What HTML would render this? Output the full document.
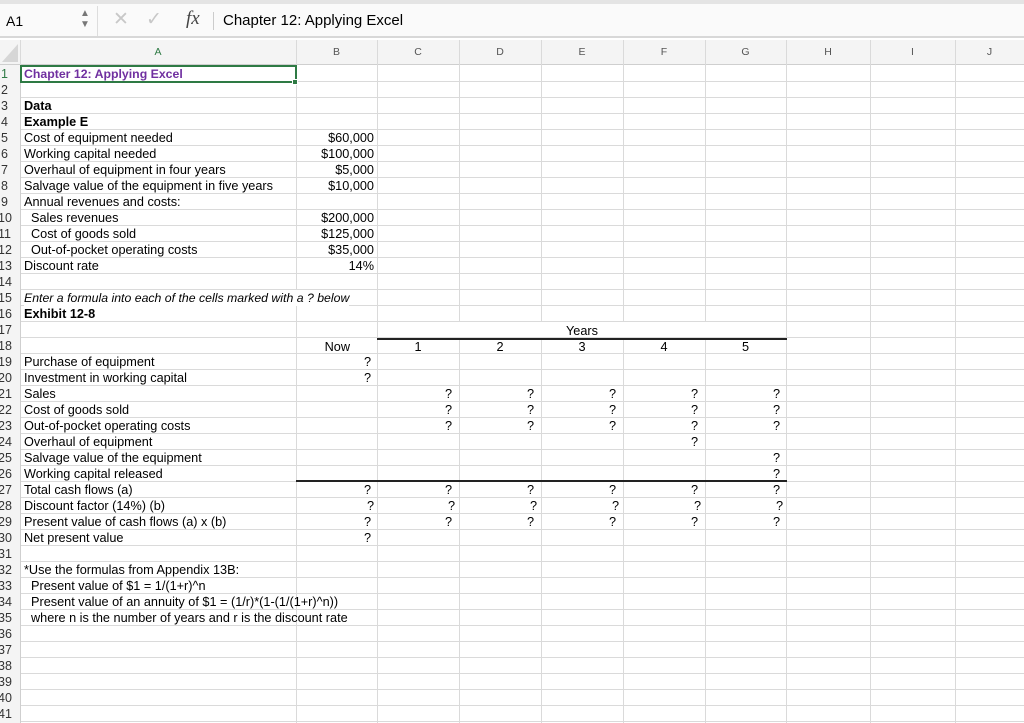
<!DOCTYPE html>
<html><head><meta charset="utf-8">
<style>
*{margin:0;padding:0;box-sizing:border-box}
body{width:1024px;height:723px;overflow:hidden;background:#fff;font-family:"Liberation Sans",Arial,sans-serif;position:relative;color:#000}
.fb{position:absolute;left:0;top:0;width:1024px;height:38px;background:#fafafa;border-top:4px solid #e4e4e4;border-bottom:2px solid #d8d8d8}
.grid{position:absolute;left:0;top:65px;width:1024px;height:658px;
background:repeating-linear-gradient(to bottom,transparent 0,transparent 15px,#dadada 15px,#dadada 16px);background-position:0 1px}
.v{position:absolute;top:40px;width:1px;height:683px;background:#dadada}
.hdr{position:absolute;left:0;top:40px;width:1024px;height:25px;background:#f4f4f4;border-bottom:1px solid #cfcfcf}
.hl{position:absolute;top:46px;font-size:10.5px;color:#555;text-align:center}
.rn{position:absolute;left:0;top:65px;width:21px;height:658px;background:#f4f4f4;border-right:1px solid #cfcfcf}
.r{position:absolute;left:-2px;font-size:12.5px;color:#333;width:22px;height:16px;line-height:16px}
.t{position:absolute;font-size:12.7px;line-height:16px;height:16px;white-space:nowrap}
.rb{position:absolute;font-size:12.7px;line-height:16px;height:16px;text-align:right;white-space:nowrap}
.c{position:absolute;font-size:12.7px;line-height:16px;height:16px;text-align:center}
b{font-weight:bold}
</style></head><body>
<div class="fb"></div>
<div style="position:absolute;left:6px;top:13px;font-size:14px">A1</div>
<div style="position:absolute;left:80px;top:8px;font-size:10px;color:#777;line-height:11px">▲<br>▼</div>
<div style="position:absolute;left:97px;top:6px;width:1px;height:30px;background:#ddd"></div>
<div style="position:absolute;left:113px;top:8px;font-size:19px;color:#c8c8c8">✕</div>
<div style="position:absolute;left:146px;top:8px;font-size:19px;color:#c8c8c8">✓</div>
<div style="position:absolute;left:186px;top:8px;font-size:19px;font-family:'Liberation Serif',serif;font-style:italic;color:#444">fx</div>
<div style="position:absolute;left:213px;top:12px;width:1px;height:18px;background:#ccc"></div>
<div style="position:absolute;left:223px;top:12px;font-size:15px">Chapter 12: Applying Excel</div>

<div class="grid"></div>
<div class="hdr"></div>
<svg style="position:absolute;left:2px;top:44px" width="16" height="18"><polygon points="16,0 16,18 0,18" fill="#d6d6d6"/></svg>
<div class="v" style="left:20px"></div><div class="v" style="left:296px"></div><div class="v" style="left:377px"></div><div class="v" style="left:459px"></div><div class="v" style="left:541px"></div><div class="v" style="left:623px"></div><div class="v" style="left:705px"></div><div class="v" style="left:786px"></div><div class="v" style="left:870px"></div><div class="v" style="left:955px"></div>
<div class="hl" style="left:20px;width:276px;color:#2e7a44">A</div>
<div class="hl" style="left:296px;width:81px">B</div>
<div class="hl" style="left:377px;width:82px">C</div>
<div class="hl" style="left:459px;width:82px">D</div>
<div class="hl" style="left:541px;width:82px">E</div>
<div class="hl" style="left:623px;width:82px">F</div>
<div class="hl" style="left:705px;width:81px">G</div>
<div class="hl" style="left:786px;width:84px">H</div>
<div class="hl" style="left:870px;width:85px">I</div>
<div class="hl" style="left:955px;width:69px">J</div>
<div class="rn"></div>
<div style="position:absolute;left:0;top:66px">
<div class="r" style="top:0;left:1px;color:#2e7a44">1</div><div class="r" style="top:16px;left:1px">2</div><div class="r" style="top:32px;left:1px">3</div><div class="r" style="top:48px;left:1px">4</div><div class="r" style="top:64px;left:1px">5</div><div class="r" style="top:80px;left:1px">6</div><div class="r" style="top:96px;left:1px">7</div><div class="r" style="top:112px;left:1px">8</div><div class="r" style="top:128px;left:1px">9</div>
<div class="r" style="top:144px">10</div><div class="r" style="top:160px">11</div><div class="r" style="top:176px">12</div><div class="r" style="top:192px">13</div><div class="r" style="top:208px">14</div><div class="r" style="top:224px">15</div><div class="r" style="top:240px">16</div><div class="r" style="top:256px">17</div><div class="r" style="top:272px">18</div><div class="r" style="top:288px">19</div><div class="r" style="top:304px">20</div><div class="r" style="top:320px">21</div><div class="r" style="top:336px">22</div><div class="r" style="top:352px">23</div><div class="r" style="top:368px">24</div><div class="r" style="top:384px">25</div><div class="r" style="top:400px">26</div><div class="r" style="top:416px">27</div><div class="r" style="top:432px">28</div><div class="r" style="top:448px">29</div><div class="r" style="top:464px">30</div><div class="r" style="top:480px">31</div><div class="r" style="top:496px">32</div><div class="r" style="top:512px">33</div><div class="r" style="top:528px">34</div><div class="r" style="top:544px">35</div><div class="r" style="top:560px">36</div><div class="r" style="top:576px">37</div><div class="r" style="top:592px">38</div><div class="r" style="top:608px">39</div><div class="r" style="top:624px">40</div><div class="r" style="top:640px">41</div>
</div>

<div style="position:absolute;left:378px;top:322px;width:408px;height:15px;background:#fff"></div>
<div style="position:absolute;left:377px;top:338px;width:410px;height:2px;background:#222"></div>
<div style="position:absolute;left:296px;top:480px;width:491px;height:2px;background:#222"></div>

<div style="position:absolute;left:20px;top:65px;width:277px;height:18px;border:2px solid #2e7a44"></div>
<div style="position:absolute;left:292px;top:79px;width:6px;height:6px;background:#2e7a44;border:1px solid #fff"></div>

<div style="position:absolute;left:0;top:66px">
<div class="t" style="left:24px;top:0;color:#7030a0;font-weight:bold;font-size:12.3px">Chapter 12: Applying Excel</div>
<div class="t" style="left:24px;top:32px"><b>Data</b></div>
<div class="t" style="left:24px;top:48px"><b>Example E</b></div>
<div class="t" style="left:24px;top:64px">Cost of equipment needed</div>
<div class="t" style="left:24px;top:80px">Working capital needed</div>
<div class="t" style="left:24px;top:96px">Overhaul of equipment in four years</div>
<div class="t" style="left:24px;top:112px">Salvage value of the equipment in five years</div>
<div class="t" style="left:24px;top:128px">Annual revenues and costs:</div>
<div class="t" style="left:31px;top:144px">Sales revenues</div>
<div class="t" style="left:31px;top:160px">Cost of goods sold</div>
<div class="t" style="left:31px;top:176px">Out-of-pocket operating costs</div>
<div class="t" style="left:24px;top:192px">Discount rate</div>
<div class="rb" style="left:296px;width:78px;top:64px">$60,000</div>
<div class="rb" style="left:296px;width:78px;top:80px">$100,000</div>
<div class="rb" style="left:296px;width:78px;top:96px">$5,000</div>
<div class="rb" style="left:296px;width:78px;top:112px">$10,000</div>
<div class="rb" style="left:296px;width:78px;top:144px">$200,000</div>
<div class="rb" style="left:296px;width:78px;top:160px">$125,000</div>
<div class="rb" style="left:296px;width:78px;top:176px">$35,000</div>
<div class="rb" style="left:296px;width:78px;top:192px">14%</div>
<div class="t" style="left:24px;top:224px;font-style:italic;font-size:12.3px;background:#fff">Enter a formula into each of the cells marked with a ? below</div>
<div class="t" style="left:24px;top:240px"><b>Exhibit 12-8</b></div>
<div class="c" style="left:377px;width:410px;top:257px">Years</div>
<div class="rb" style="left:296px;width:54px;top:273px">Now</div>
<div class="c" style="left:377px;width:82px;top:273px">1</div>
<div class="c" style="left:459px;width:82px;top:273px">2</div>
<div class="c" style="left:541px;width:82px;top:273px">3</div>
<div class="c" style="left:623px;width:82px;top:273px">4</div>
<div class="c" style="left:705px;width:81px;top:273px">5</div>
<div class="t" style="left:24px;top:288px">Purchase of equipment</div>
<div class="t" style="left:24px;top:304px">Investment in working capital</div>
<div class="t" style="left:24px;top:320px">Sales</div>
<div class="t" style="left:24px;top:336px">Cost of goods sold</div>
<div class="t" style="left:24px;top:352px">Out-of-pocket operating costs</div>
<div class="t" style="left:24px;top:368px">Overhaul of equipment</div>
<div class="t" style="left:24px;top:384px">Salvage value of the equipment</div>
<div class="t" style="left:24px;top:400px">Working capital released</div>
<div class="t" style="left:24px;top:416px">Total cash flows (a)</div>
<div class="t" style="left:24px;top:432px">Discount factor (14%) (b)</div>
<div class="t" style="left:24px;top:448px">Present value of cash flows (a) x (b)</div>
<div class="t" style="left:24px;top:464px">Net present value</div>
<div class="t" style="left:24px;top:496px">*Use the formulas from Appendix 13B:</div>
<div class="t" style="left:31px;top:512px">Present value of $1 = 1/(1+r)^n</div>
<div class="t" style="left:31px;top:528px">Present value of an annuity of $1 = (1/r)*(1-(1/(1+r)^n))</div>
<div class="t" style="left:31px;top:544px">where n is the number of years and r is the discount rate</div>

<div class="rb" style="left:296px;width:75px;top:288px">?</div>
<div class="rb" style="left:296px;width:75px;top:304px">?</div>
<div class="rb" style="left:296px;width:75px;top:416px">?</div>
<div class="rb" style="left:296px;width:78px;top:432px">?</div>
<div class="rb" style="left:296px;width:75px;top:448px">?</div>
<div class="rb" style="left:296px;width:75px;top:464px">?</div>
<div class="rb" style="left:377px;width:75px;top:320px">?</div><div class="rb" style="left:377px;width:75px;top:336px">?</div><div class="rb" style="left:377px;width:75px;top:352px">?</div><div class="rb" style="left:377px;width:75px;top:416px">?</div><div class="rb" style="left:377px;width:78px;top:432px">?</div><div class="rb" style="left:377px;width:75px;top:448px">?</div>
<div class="rb" style="left:459px;width:75px;top:320px">?</div><div class="rb" style="left:459px;width:75px;top:336px">?</div><div class="rb" style="left:459px;width:75px;top:352px">?</div><div class="rb" style="left:459px;width:75px;top:416px">?</div><div class="rb" style="left:459px;width:78px;top:432px">?</div><div class="rb" style="left:459px;width:75px;top:448px">?</div>
<div class="rb" style="left:541px;width:75px;top:320px">?</div><div class="rb" style="left:541px;width:75px;top:336px">?</div><div class="rb" style="left:541px;width:75px;top:352px">?</div><div class="rb" style="left:541px;width:75px;top:416px">?</div><div class="rb" style="left:541px;width:78px;top:432px">?</div><div class="rb" style="left:541px;width:75px;top:448px">?</div>
<div class="rb" style="left:623px;width:75px;top:320px">?</div><div class="rb" style="left:623px;width:75px;top:336px">?</div><div class="rb" style="left:623px;width:75px;top:352px">?</div><div class="rb" style="left:623px;width:75px;top:368px">?</div><div class="rb" style="left:623px;width:75px;top:416px">?</div><div class="rb" style="left:623px;width:78px;top:432px">?</div><div class="rb" style="left:623px;width:75px;top:448px">?</div>
<div class="rb" style="left:705px;width:75px;top:320px">?</div><div class="rb" style="left:705px;width:75px;top:336px">?</div><div class="rb" style="left:705px;width:75px;top:352px">?</div><div class="rb" style="left:705px;width:75px;top:384px">?</div><div class="rb" style="left:705px;width:75px;top:400px">?</div><div class="rb" style="left:705px;width:75px;top:416px">?</div><div class="rb" style="left:705px;width:78px;top:432px">?</div><div class="rb" style="left:705px;width:75px;top:448px">?</div>
</div>
</body></html>
